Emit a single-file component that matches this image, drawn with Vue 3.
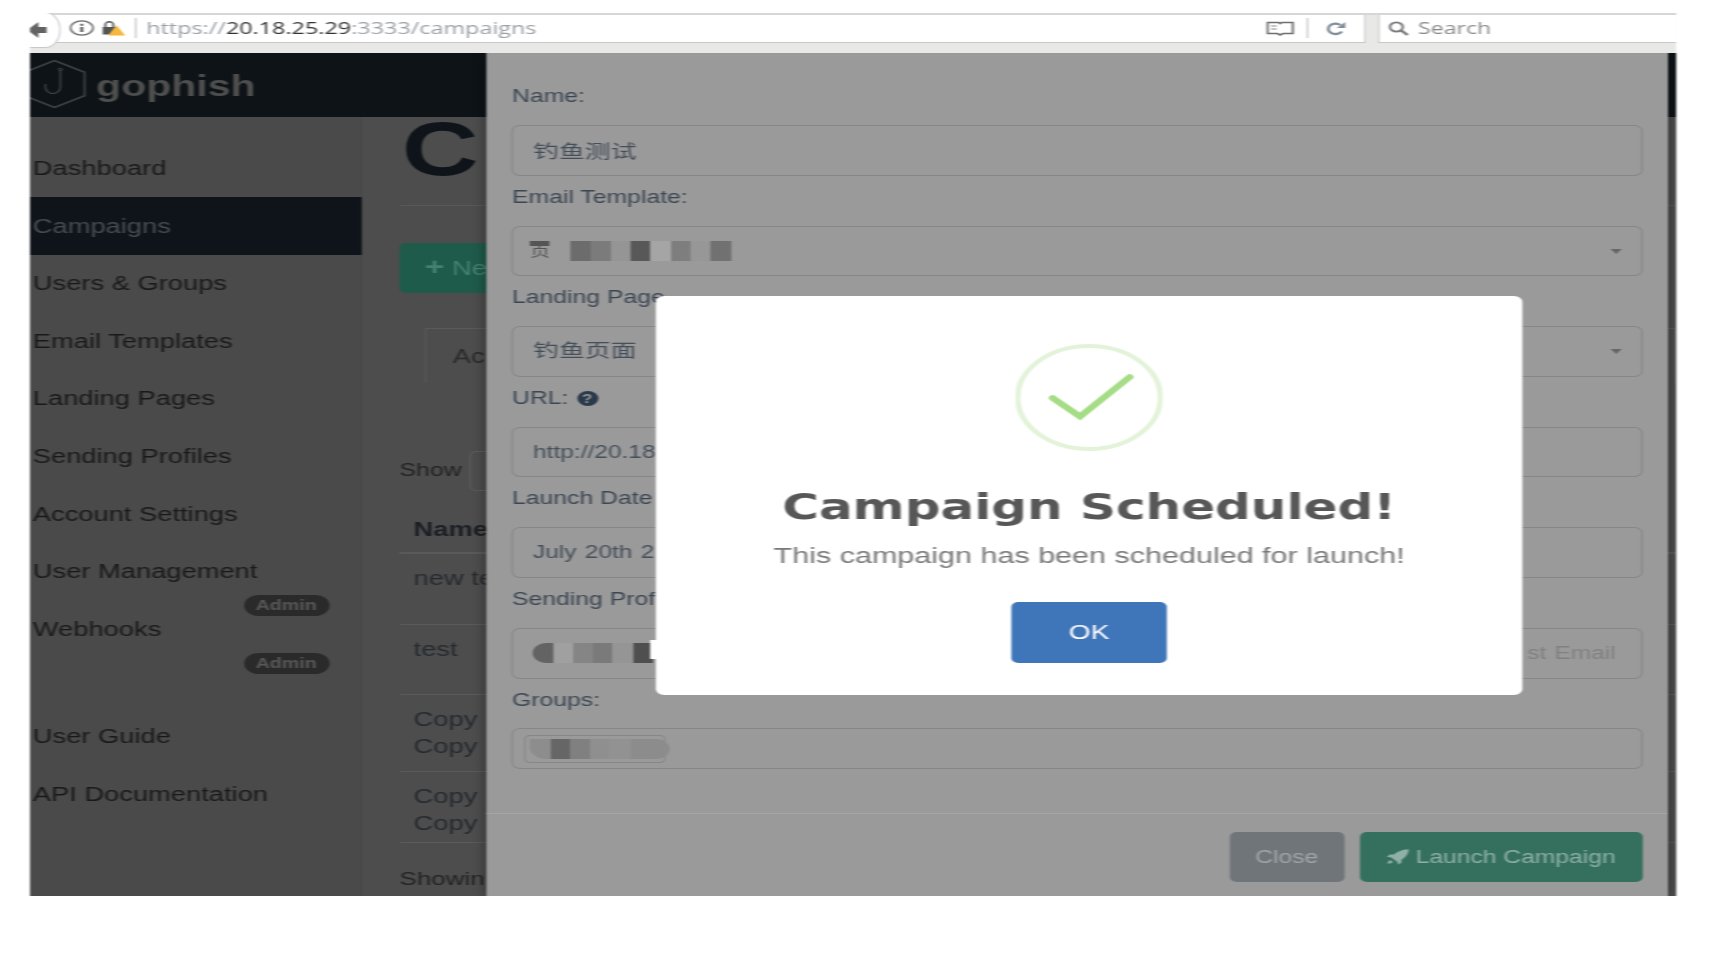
<template>
  <div class="shot">
    <div class="frame">
      <div class="toolbar">
        <div class="back">
          <svg class="back-arrow" viewBox="0 0 12 16"><path d="M-2 8 6 0v5h6v6H6v5z" fill="#636363"/></svg>
        </div>
        <div class="urlbar">
          <svg class="ic-info" viewBox="0 0 18 16">
            <ellipse cx="9" cy="8" rx="8" ry="7.200" fill="none" stroke="#666" stroke-width="1.300"/>
            <rect x="8" y="7" width="2" height="5" fill="#555"/>
            <rect x="8" y="3.800" width="2" height="2" fill="#555"/>
          </svg>
          <svg class="ic-lock" viewBox="0 0 18 16">
            <path d="M1 7h10v8H1z" fill="#555"/>
            <path d="M3 7V4.500a3 3 0 0 1 6 0V7" fill="none" stroke="#555" stroke-width="1.600"/>
            <path d="M11.500 5 18 16H5z" fill="#f5b83d"/>
          </svg>
          <span class="sep"></span>
          <span class="url">https://<b>20.18.25.29</b>:3333/campaigns</span>
          <span class="grow"></span>
          <svg class="ic-book" viewBox="0 0 20 15">
            <path d="M1 1.500h8l1 1 1-1h8v11h-7l-2 1.500-2-1.500H1z" fill="none" stroke="#6f6f6f" stroke-width="1.600"/>
            <path d="M3.500 5h4M3.500 8h4" stroke="#8a8a8a" stroke-width="1.200"/>
          </svg>
          <span class="sep sep-right"></span>
          <svg class="ic-reload" viewBox="0 0 15 15">
            <path d="M12 10.500A5.200 5.200 0 1 1 11 4" fill="none" stroke="#7f8c99" stroke-width="2.200"/>
            <path d="M14.500 1v6h-6z" fill="#7f8c99"/>
          </svg>
        </div>
        <div class="searchbar">
          <svg class="ic-search" viewBox="0 0 15 15">
            <ellipse cx="6" cy="6" rx="4.600" ry="4.600" fill="none" stroke="#7a7a7a" stroke-width="1.800"/>
            <path d="M9.500 9.500 14 14" stroke="#7a7a7a" stroke-width="2.400"/>
          </svg>
          <span>Search</span>
        </div>
      </div>

      <div class="app">
        <header class="navbar">
          <svg class="logo" viewBox="0 0 44 48">
            <path d="M21.500.5 43 12.250v23.500L21.500 47.500 0 35.750v-23.500z" fill="none" stroke="#3f4345" stroke-width="1.500"/>
            <circle cx="25.700" cy="9.500" r="1.200" fill="none" stroke="#3f4345"/>
            <path d="M25.700 11v16a5.300 6.500 0 0 1-10.700 0v-3" fill="none" stroke="#3f4345" stroke-width="1.300"/>
          </svg>
          <span class="brand">gophish</span>
        </header>

        <div class="columns">
          <aside class="sidebar">
            <template v-for="item in navItems" :key="item.label">
              <div class="nav-item" :class="{active: item.active, spaced: item.spaced}">
                {{ item.label }}
                <span v-if="item.admin" class="badge">Admin</span>
              </div>
            </template>
          </aside>

          <main class="content">
            <h1 class="title">Ca</h1>
            <div class="new-btn"><span class="plus">+</span> Ne</div>
            <div class="tabs"><span class="tab">Ac</span></div>
            <div class="show-row"><span>Show</span><span class="show-box"></span></div>
            <div class="th">Name</div>
            <div v-for="row in campaigns" :key="row.id" class="tr" :style="{height: row.height + 'px'}">
              <div v-for="(line, i) in row.lines" :key="i">{{ line }}</div>
            </div>
            <div class="showing">Showin</div>
          </main>
        </div>

        <section class="modal">
          <div class="form">
            <div class="field">
              <label>Name:</label>
              <div class="input cjk">钓鱼测试</div>
            </div>
            <div class="field">
              <label>Email Template:</label>
              <div class="input">
                <span class="hidden-head"><i></i>页</span>
                <span class="mosaic">
                  <span v-for="(c, i) in templateBlur" :key="i" :style="{background: c}"></span>
                </span>
                <span class="caret"></span>
              </div>
            </div>
            <div class="field">
              <label>Landing Page</label>
              <div class="input cjk landing"><span>钓鱼页面</span><span class="caret"></span></div>
            </div>
            <div class="field">
              <label>URL: <span class="help">?</span></label>
              <div class="input">http://20.18</div>
            </div>
            <div class="field">
              <label>Launch Date</label>
              <div class="input">July 20th 2</div>
            </div>
            <div class="field">
              <label>Sending Prof</label>
              <div class="input">
                <span class="mosaic sending">
                  <span v-for="(c, i) in sendingBlur" :key="i" :style="{background: c}"></span>
                </span>
                <span class="test-email">st Email</span>
              </div>
            </div>
            <div class="field">
              <label>Groups:</label>
              <div class="input short">
                <span class="group-tag">
                  <span class="mosaic groups">
                    <span v-for="(c, i) in groupBlur" :key="i" :style="{background: c}"></span>
                  </span>
                </span>
              </div>
            </div>
          </div>
          <footer class="modal-foot">
            <div class="btn btn-close">Close</div>
            <div class="btn btn-launch">
              <svg class="rocket" viewBox="0 0 16 16">
                <path d="M15.800.2C12 .3 8.800 1.800 6.300 4.300L5.300 5.400H2.400L.2 7.700l3.100.7 4.300 4.300.7 3.100 2.300-2.200v-2.900l1.100-1C14.200 7.200 15.700 4 15.800.2zM2.500 11c-1 .6-1.600 2-1.800 3.800 1.800-.2 3.200-.8 3.800-1.800z" fill="#8fb0a5"/>
              </svg>
              Launch Campaign
            </div>
          </footer>
        </section>

        <span class="white-chip"></span>
        <div class="dialog">
          <div class="check">
            <svg viewBox="0 0 105 107">
              <ellipse cx="52.500" cy="53.500" rx="51" ry="51.500" fill="none" stroke="#e3f3d9" stroke-width="4"/>
              <path d="M26.500 54 46 72.500 81.500 33" fill="none" stroke="#a5dc86" stroke-width="5.500" stroke-linecap="round" stroke-linejoin="miter"/>
            </svg>
          </div>
          <h2>Campaign Scheduled!</h2>
          <p>This campaign has been scheduled for launch!</p>
          <div class="ok">OK</div>
        </div>
      </div>
    </div>
  </div>
</template>

<script setup>
const navItems = [
  {label: 'Dashboard'},
  {label: 'Campaigns', active: true},
  {label: 'Users & Groups'},
  {label: 'Email Templates'},
  {label: 'Landing Pages'},
  {label: 'Sending Profiles'},
  {label: 'Account Settings'},
  {label: 'User Management', admin: true},
  {label: 'Webhooks', admin: true},
  {label: 'User Guide', spaced: true},
  {label: 'API Documentation'}
]

// only the part of each cell that shows left of the modal
const campaigns = [
  {id: 1, height: 71, lines: ['new te']},
  {id: 2, height: 70, lines: ['test']},
  {id: 3, height: 77, lines: ['Copy', 'Copy']},
  {id: 4, height: 71, lines: ['Copy', 'Copy']}
]

const templateBlur = ['#6c6c6c', '#7b7b7b', '#959595', '#585858', '#a5a5a5', '#7e7e7e', '#979797', '#717171']
const sendingBlur = ['#636363', '#a0a0a0', '#858585', '#7a7a7a', '#959595', '#4f4f4f']
const groupBlur = ['#8d8d8d', '#666666', '#808080', '#8f8f8f', '#929292', '#8c8c8c', '#8c8c8c']
</script>

<style scoped>
.shot {
  width: 1718px;
  height: 962px;
  overflow: hidden;
  background: #fff;
  padding-top: 13px;
  box-sizing: border-box;
}

.frame {
  width: 1175.700px;
  height: 883px;
  margin-left: 30px;
  overflow: hidden;
  transform: scaleX(1.4);
  transform-origin: left top;
  filter: blur(.65px);
  font-family: "Liberation Sans", Arial, sans-serif;
}

.toolbar {
  height: 39.500px;
  box-sizing: border-box;
  display: flex;
  background: #e8e8e6;
  border-top: 2px solid #d6d6d6;
  padding-bottom: 10px;
}

.back {
  width: 21px;
  height: 34px;
  margin-top: -3px;
  margin-right: -8px;
  flex: none;
  background: #fff;
  border: 1px solid #c9c9c9;
  border-left: 0;
  border-radius: 0 50% 50% 0;
  display: flex;
  align-items: center;
  z-index: 1;
}

.back-arrow {
  width: 12px;
  height: 16px;
}

.urlbar {
  flex: none;
  width: 939.500px;
  box-sizing: border-box;
  margin-right: 9px;
  padding-left: 13px;
  background: #fff;
  border: 1px solid #c8c8c8;
  border-top: 0;
  display: flex;
  align-items: center;
}

.ic-info {
  width: 18px;
  height: 16px;
  flex: none;
}

.ic-lock {
  width: 17px;
  height: 16px;
  margin-left: 5px;
  flex: none;
}

.sep {
  width: 1px;
  height: 20px;
  margin: 0 7px;
  background: #bdbdbd;
  flex: none;
}

.sep-right {
  margin: 0 12px 0 8.600px;
}

.url {
  margin-top: -2px;
  font-family: "Open Sans", sans-serif;
  font-size: 16.700px;
  color: #9aa0a5;
  white-space: nowrap;
}

.url b {
  font-weight: 400;
  color: #333;
}

.grow {
  flex: 1;
}

.ic-book {
  width: 20px;
  height: 15px;
  flex: none;
}

.ic-reload {
  width: 15px;
  height: 15px;
  margin-right: 13px;
  flex: none;
}

.searchbar {
  flex: 1;
  padding-left: 6px;
  background: #fff;
  border: 1px solid #c8c8c8;
  border-top: 0;
  border-right: 0;
  display: flex;
  align-items: center;
  gap: 7px;
  font-family: "Open Sans", sans-serif;
  font-size: 16.500px;
  color: #8a8a8a;
}

.searchbar span {
  margin-top: -2px;
}

.ic-search {
  width: 15px;
  height: 15px;
}

.app {
  position: relative;
  height: 843.500px;
  overflow: hidden;
  background: #3c3c3c;
}

.navbar {
  height: 64.500px;
  background: #0d1317;
  display: flex;
  align-items: center;
}

.logo {
  width: 44px;
  height: 48px;
  margin: -2px 0 0 -4.300px;
  flex: none;
}

.brand {
  margin: 2px 0 0 7.500px;
  font-size: 29.300px;
  font-weight: 700;
  color: #4e4e4e;
}

.columns {
  display: flex;
  height: 779px;
}

.sidebar {
  width: 237px;
  flex: none;
  box-sizing: border-box;
  padding-top: 23.600px;
  background: #4a4a4a;
}

.nav-item {
  position: relative;
  height: 57.700px;
  line-height: 55px;
  padding-left: 2px;
  font-size: 19.500px;
  color: #191919;
  white-space: nowrap;
}

.nav-item.active {
  height: 58.500px;
  margin-top: -1.600px;
  margin-bottom: .800px;
  background: #0e1419;
  color: #474c50;
  line-height: 58px;
}

.nav-item.spaced {
  margin-top: 49.700px;
}

.badge {
  position: absolute;
  top: 50.500px;
  right: 23.500px;
  height: 21px;
  width: 61px;
  border-radius: 11px;
  background: #2a2a2a;
  color: #585858;
  font-size: 14px;
  font-weight: 700;
  line-height: 21px;
  text-align: center;
}

.content {
  flex: 1;
  min-width: 0;
  box-sizing: border-box;
  padding-left: 27px;
  background: #4d4d4d;
  font-size: 19.500px;
  color: #1d1d1d;
  white-space: nowrap;
}

.title {
  height: 89px;
  margin: 0;
  padding-left: 1.500px;
  box-sizing: border-box;
  border-bottom: 1px solid #585858;
  font-size: 76px;
  font-weight: 700;
  line-height: 63px;
  letter-spacing: 5px;
  color: #0e1419;
}

.new-btn {
  width: 200px;
  height: 50px;
  margin-top: 37px;
  padding-left: 18px;
  box-sizing: border-box;
  border-radius: 5px;
  background: #1e5b4b;
  color: #47806f;
  line-height: 50px;
}

.plus {
  font-weight: 700;
  font-size: 24px;
  line-height: 20px;
}

.tabs {
  height: 55px;
  margin-top: 35px;
  padding-left: 18px;
}

.tab {
  display: block;
  height: 55px;
  box-sizing: border-box;
  padding-left: 19px;
  border: 1px solid #5a5a5a;
  border-bottom: 0;
  line-height: 54px;
  color: #2a2a2a;
}

.show-row {
  height: 41px;
  margin-top: 67px;
  display: flex;
  align-items: center;
  gap: 6px;
  font-size: 17.700px;
  color: #222;
}

.show-box {
  width: 80px;
  height: 40px;
  box-sizing: border-box;
  border: 1px solid #5c5c5c;
  border-radius: 5px;
  flex: none;
}

.th {
  height: 63px;
  box-sizing: border-box;
  padding: 27px 0 0 10px;
  font-weight: 700;
  color: #1a1f24;
  border-bottom: 2px solid #5a5a5a;
}

.tr {
  box-sizing: border-box;
  padding: 11px 0 0 10px;
  line-height: 27px;
  border-bottom: 1px solid #5a5a5a;
  color: #252a2f;
}

.tr:last-of-type {
  border-bottom: 0;
}

.showing {
  margin-top: 24px;
  line-height: 24px;
  font-size: 18.500px;
  color: #222;
}

.modal {
  position: absolute;
  left: 325.700px;
  top: 0;
  width: 844px;
  height: 100%;
  background: #9a9a9a;
  box-shadow: 0 0 10px rgba(0, 0, 0, .45);
  display: flex;
  flex-direction: column;
  color: #3c4653;
}

.form {
  padding: 28px 18px 0 18.600px;
  flex: 1;
}

.field label {
  display: block;
  height: 26px;
  margin-bottom: 18.500px;
  padding-top: 2.600px;
  box-sizing: border-box;
  font-size: 17.700px;
  line-height: 26px;
  white-space: nowrap;
}

.field {
  margin-bottom: 5.400px;
}

.input {
  position: relative;
  height: 50.700px;
  box-sizing: border-box;
  padding-left: 14px;
  border: 1px solid #868686;
  border-radius: 6px;
  display: flex;
  align-items: center;
  font-family: "Liberation Sans", "Noto Sans CJK SC", sans-serif;
  font-size: 17.500px;
  word-spacing: 1px;
  color: #454f5a;
  white-space: nowrap;
  overflow: hidden;
}

.input.cjk {
  font-size: 18.500px;
}

.input.short {
  height: 41px;
  padding-left: 8px;
  overflow: visible;
}

.landing span:first-child {
  margin-top: -5px;
}

.help {
  display: inline-flex;
  width: 15px;
  height: 15px;
  border-radius: 50%;
  background: #2a3a4a;
  color: #999;
  font-size: 12px;
  font-weight: 700;
  align-items: center;
  justify-content: center;
  vertical-align: 1px;
  margin-left: 1px;
}

.mosaic {
  display: flex;
  height: 20px;
  flex: none;
}

.mosaic span {
  width: 14.300px;
  height: 100%;
}

.hidden-head {
  position: relative;
  width: 14px;
  font-size: 14px;
  margin-left: -2px;
  margin-right: 15px;
  color: #555;
  line-height: 20px;
}

.hidden-head i {
  position: absolute;
  top: 0;
  left: 0;
  width: 14px;
  height: 5px;
  background: #555;
}

.sending span:first-child {
  border-radius: 10px 0 0 10px;
}

.group-tag {
  display: flex;
  align-items: center;
  height: 26px;
  padding-right: 37px;
  border: 1px solid #878787;
  border-radius: 4px;
}

.groups {
  margin-left: 3px;
  margin-right: -41px;
}

.groups span:first-child {
  border-radius: 0 0 0 12px;
}

.groups span:last-child {
  border-radius: 0 10px 10px 0;
}

.caret {
  position: absolute;
  right: 14px;
  top: 22px;
  border-left: 4px solid transparent;
  border-right: 4px solid transparent;
  border-top: 5px solid #666;
}

.test-email {
  margin-left: auto;
  padding-right: 18px;
  color: #808080;
}

.modal-foot {
  height: 83.500px;
  box-sizing: border-box;
  border-top: 1px solid #a6a6a6;
  padding: 18px 18px 0 0;
  display: flex;
  justify-content: flex-end;
  gap: 11px;
}

.btn {
  height: 50px;
  box-sizing: border-box;
  padding-top: 1px;
  border-radius: 5px;
  display: flex;
  align-items: center;
  justify-content: center;
  font-size: 17.600px;
}

.btn-close {
  width: 82px;
  background: #70757a;
  color: #a0a5a8;
}

.btn-launch {
  width: 202px;
  gap: 5px;
  background: #35705f;
  color: #8fb0a5;
}

.rocket {
  width: 16px;
  height: 16px;
}

.white-chip {
  position: absolute;
  left: 443px;
  top: 587px;
  width: 5px;
  height: 19px;
  background: #fff;
}

.dialog {
  position: absolute;
  left: 447px;
  top: 243.500px;
  width: 619px;
  height: 398.500px;
  box-sizing: border-box;
  padding-top: 48px;
  border-radius: 6px;
  background: #fff;
  text-align: center;
}

.check {
  width: 105px;
  height: 107px;
  margin: 0 auto;
}

.check svg {
  display: block;
  width: 100%;
  height: 100%;
}

.dialog h2 {
  margin: 34px 0 0;
  font-family: "DejaVu Sans", sans-serif;
  font-size: 35.700px;
  font-weight: 700;
  line-height: 44px;
  color: #575757;
}

.dialog p {
  margin: 12px 0 0;
  font-size: 21.800px;
  line-height: 30px;
  color: #797979;
}

.ok {
  width: 111px;
  height: 61px;
  margin: 31px auto 0;
  border-radius: 5px;
  background: #3f75b9;
  color: #fff;
  font-size: 20px;
  line-height: 61px;
}
</style>

<style>
html, body {
  margin: 0;
  background: #fff;
  overflow: hidden;
}
</style>
